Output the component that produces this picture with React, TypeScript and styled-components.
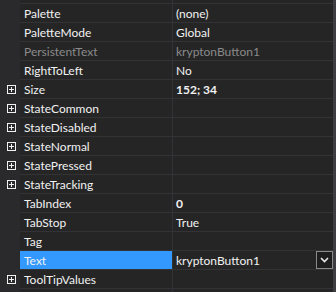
import React from "react";
import styled, { createGlobalStyle } from "styled-components";

const Global = createGlobalStyle`
  html, body { margin: 0; padding: 0; background: #252526; }
  body { width: 336px; height: 292px; overflow: hidden; }
`;

const Grid = styled.div`
  display: flex;
  width: 336px;
  height: 292px;
  overflow: hidden;
  background: #252526;
  font-family: "Segoe UI", Lato, "Noto Sans", sans-serif;
  font-size: 12px;
  color: #f1f1f1;
`;

const Body = styled.div`
  flex: 1;
  display: flex;
  flex-direction: column;
`;

const Scroll = styled.div`
  width: 3px;
  background: #3e3e42;
`;

const Row = styled.div<{ $h?: number }>`
  display: grid;
  grid-template-columns: 20px 152px 1px 1fr;
  height: ${(p) => p.$h ?? 18}px;
  flex: none;
`;

const RowLine = styled.div`
  display: grid;
  grid-template-columns: 20px 1fr;
  height: 1px;
  flex: none;
  &::before { content: ""; background: #2a2a2c; }
  &::after { content: ""; background: #333337; }
`;

const Gutter = styled.div`
  background: #2a2a2c;
  display: flex;
  align-items: center;
  justify-content: center;
  padding-left: 3px;
`;

const Divider = styled.div`
  background: #333337;
`;

const Name = styled.div<{ $sel?: boolean; $dim?: boolean }>`
  display: flex;
  align-items: center;
  padding-left: 4px;
  white-space: nowrap;
  background: ${(p) => (p.$sel ? "#3399ff" : "transparent")};
  color: ${(p) => (p.$dim ? "#8a8a8a" : "#f1f1f1")};
`;

const Value = styled.div<{ $bold?: boolean; $dim?: boolean }>`
  display: flex;
  align-items: center;
  padding-left: 3px;
  white-space: nowrap;
  font-weight: ${(p) => (p.$bold ? 700 : 400)};
  color: ${(p) => (p.$dim ? "#8a8a8a" : "#f1f1f1")};
`;

const ValueText = styled.span`
  flex: 1;
`;

const DropButton = styled.div`
  width: 15px;
  height: 16px;
  border: 1px solid #8a8a8a;
  background: #1e1e1e;
  display: flex;
  align-items: center;
  justify-content: center;
`;

const Plus = () => (
  <svg width="9" height="9" viewBox="0 0 9 9" shapeRendering="crispEdges">
    <rect x="0.5" y="0.5" width="8" height="8" fill="none" stroke="#f1f1f1" />
    <rect x="2" y="4" width="5" height="1" fill="#f1f1f1" />
    <rect x="4" y="2" width="1" height="5" fill="#f1f1f1" />
  </svg>
);

const Chevron = () => (
  <svg width="9" height="6" viewBox="0 0 9 6">
    <path d="M1 1 L4.5 4.5 L8 1" fill="none" stroke="#e8e8e8" strokeWidth="1.6" />
  </svg>
);

type Item = {
  name: string;
  value?: string;
  expand?: boolean;
  bold?: boolean;
  dim?: boolean;
  sel?: boolean;
};

const items: Item[] = [
  { name: "Palette", value: "(none)" },
  { name: "PaletteMode", value: "Global" },
  { name: "PersistentText", value: "kryptonButton1", dim: true },
  { name: "RightToLeft", value: "No" },
  { name: "Size", value: "152; 34", expand: true, bold: true },
  { name: "StateCommon", expand: true },
  { name: "StateDisabled", expand: true },
  { name: "StateNormal", expand: true },
  { name: "StatePressed", expand: true },
  { name: "StateTracking", expand: true },
  { name: "TabIndex", value: "0", bold: true },
  { name: "TabStop", value: "True" },
  { name: "Tag" },
  { name: "Text", value: "kryptonButton1", sel: true },
  { name: "ToolTipValues", expand: true },
];

export default function App() {
  return (
    <>
      <Global />
      <Grid>
        <Body>
          <Row $h={3}>
            <Gutter />
            <Name />
            <Divider />
            <Value />
          </Row>
          <RowLine />
          {items.map((it) => (
            <React.Fragment key={it.name}>
              <Row>
                <Gutter>{it.expand && <Plus />}</Gutter>
                <Name $sel={it.sel} $dim={it.dim}>{it.name}</Name>
                <Divider />
                <Value $bold={it.bold} $dim={it.dim}>
                  <ValueText>{it.value}</ValueText>
                  {it.sel && (
                    <DropButton>
                      <Chevron />
                    </DropButton>
                  )}
                </Value>
              </Row>
              <RowLine />
            </React.Fragment>
          ))}
          <Row $h={10}>
            <Gutter />
            <Name />
            <Divider />
            <Value />
          </Row>
        </Body>
        <Scroll />
      </Grid>
    </>
  );
}
